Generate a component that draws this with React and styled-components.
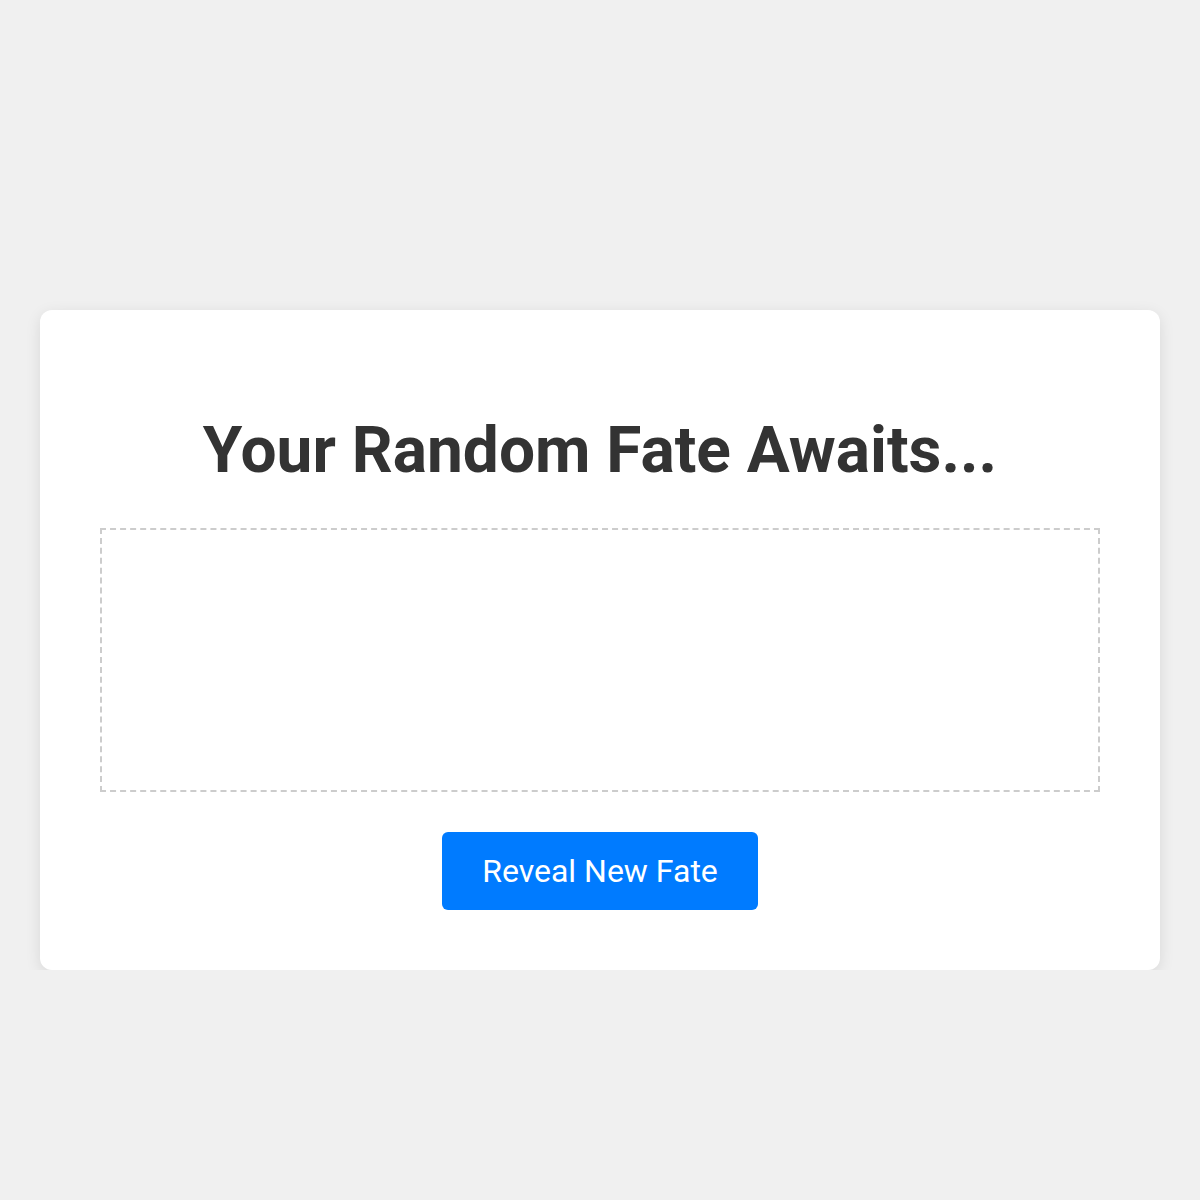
import React, { useState } from "react";
import styled, { createGlobalStyle } from "styled-components";

const GlobalStyle = createGlobalStyle`
  body {
    margin: 0;
    background: #f0f0f0;
    font-family: Roboto, "Liberation Sans", sans-serif;
  }
`;

const Page = styled.div`
  padding: 310px 40px 0;
`;

const Card = styled.div`
  background: #fff;
  border-radius: 12px;
  box-shadow: 0 4px 15px rgba(0, 0, 0, 0.1);
  padding: 60px;
  display: flex;
  flex-direction: column;
  align-items: center;
`;

const Title = styled.h1`
  margin: 43px 0 40px;
  font-size: 64px;
  font-weight: 700;
  color: #333;
  text-align: center;
`;

const FateBox = styled.div`
  align-self: stretch;
  min-height: 260px;
  border: 2px dashed #ccc;
  display: flex;
  align-items: center;
  justify-content: center;
  font-size: 28px;
  color: #555;
`;

const RevealButton = styled.button`
  margin-top: 40px;
  padding: 20px 40px;
  border: none;
  border-radius: 6px;
  background: #007bff;
  color: #fff;
  font-family: inherit;
  font-size: 32px;
  cursor: pointer;
  &:hover {
    background: #0069d9;
  }
`;

const App = () => {
  const [fate, setFate] = useState("");

  return (
    <>
      <GlobalStyle />
      <Page>
        <Card>
          <Title>Your Random Fate Awaits...</Title>
          <FateBox>{fate}</FateBox>
          <RevealButton onClick={() => setFate(fate)}>Reveal New Fate</RevealButton>
        </Card>
      </Page>
    </>
  );
};

export default App;
